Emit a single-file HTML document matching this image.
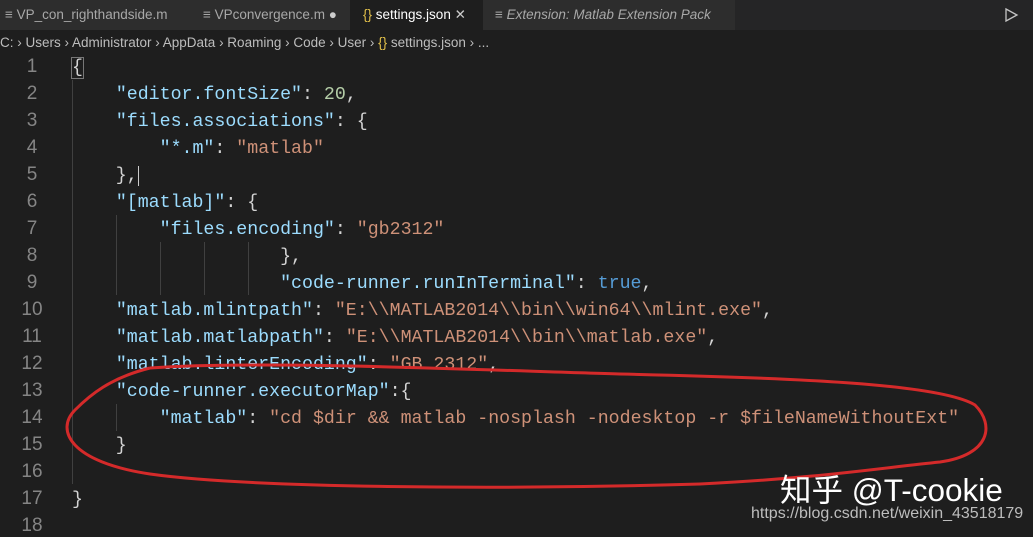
<!DOCTYPE html>
<html><head><meta charset="utf-8"><style>
html,body{margin:0;padding:0;}
body{width:1033px;height:534px;background:#1e1e1e;overflow:hidden;position:relative;font-family:"Liberation Sans","Noto Sans CJK SC",sans-serif;}
.tabs{position:absolute;left:0;top:0;width:1033px;height:30px;background:#252526;}
.tab{position:absolute;top:0;height:30px;line-height:30px;font-size:13.5px;color:#a8a8a8;background:#2d2d2d;white-space:nowrap;}
.crumb{position:absolute;top:31px;left:0;height:24px;line-height:24px;font-size:13.5px;color:#bdbdbd;white-space:nowrap;}
.ln{position:absolute;left:0;width:64px;text-align:center;font-family:"Liberation Sans",sans-serif;font-size:19px;color:#858585;}
.code{position:absolute;left:72px;font-family:"Liberation Mono",monospace;font-size:18.25px;color:#d4d4d4;white-space:pre;}
.k{color:#9cdcfe}.s{color:#ce9178}.n{color:#b5cea8}.b{color:#569cd6}
.g{position:absolute;width:1px;background:#404040;}
</style></head><body>
<div class="tabs">
 <div class="tab" style="left:0;width:185px;padding-left:5px;">≡ VP_con_righthandside.m</div>
 <div class="tab" style="left:188px;width:160px;padding-left:15px;">≡ VPconvergence.m <span style="color:#ccc">●</span></div>
 <div class="tab" style="left:350px;width:130px;padding-left:13px;background:#1e1e1e;color:#fff;"><span style="color:#e2c04a">{}</span> settings.json <span style="color:#ccc">✕</span></div>
 <div class="tab" style="left:483px;width:240px;padding-left:12px;font-style:italic;">≡ Extension: Matlab Extension Pack</div>
 <svg style="position:absolute;left:1003px;top:7px" width="16" height="16"><path d="M3 2 L14 8 L3 14 Z" fill="none" stroke="#c5c5c5" stroke-width="1.3"/></svg>
</div>
<div class="crumb">C: › Users › Administrator › AppData › Roaming › Code › User › <span style="color:#e2c04a">{}</span> settings.json › ...</div>

<div class="g" style="left:72px;top:80px;height:404px"></div>
<div class="g" style="left:116px;top:215px;height:80px"></div>
<div class="g" style="left:160px;top:242px;height:53px"></div>
<div class="g" style="left:204px;top:242px;height:53px"></div>
<div class="g" style="left:248px;top:242px;height:53px"></div>
<div class="g" style="left:116px;top:404px;height:27px"></div>

<div class="ln" style="top:56px">1</div><div class="ln" style="top:83px">2</div><div class="ln" style="top:110px">3</div><div class="ln" style="top:137px">4</div><div class="ln" style="top:164px">5</div><div class="ln" style="top:191px">6</div><div class="ln" style="top:218px">7</div><div class="ln" style="top:245px">8</div><div class="ln" style="top:272px">9</div><div class="ln" style="top:299px">10</div><div class="ln" style="top:326px">11</div><div class="ln" style="top:353px">12</div><div class="ln" style="top:380px">13</div><div class="ln" style="top:407px">14</div><div class="ln" style="top:434px">15</div><div class="ln" style="top:461px">16</div><div class="ln" style="top:488px">17</div><div class="ln" style="top:515px">18</div>

<div class="code" style="top:58px"><span style="outline:1px solid #777">{</span></div>
<div class="code" style="top:85px">    <span class="k">"editor.fontSize"</span>: <span class="n">20</span>,</div>
<div class="code" style="top:112px">    <span class="k">"files.associations"</span>: {</div>
<div class="code" style="top:139px">        <span class="k">"*.m"</span>: <span class="s">"matlab"</span></div>
<div class="code" style="top:166px">    },<span style="border-left:1px solid #ccc"> </span></div>
<div class="code" style="top:193px">    <span class="k">"[matlab]"</span>: {</div>
<div class="code" style="top:220px">        <span class="k">"files.encoding"</span>: <span class="s">"gb2312"</span></div>
<div class="code" style="top:247px">                   },</div>
<div class="code" style="top:274px">                   <span class="k">"code-runner.runInTerminal"</span>: <span class="b">true</span>,</div>
<div class="code" style="top:301px">    <span class="k">"matlab.mlintpath"</span>: <span class="s">"E:\\MATLAB2014\\bin\\win64\\mlint.exe"</span>,</div>
<div class="code" style="top:328px">    <span class="k">"matlab.matlabpath"</span>: <span class="s">"E:\\MATLAB2014\\bin\\matlab.exe"</span>,</div>
<div class="code" style="top:355px">    <span class="k">"matlab.linterEncoding"</span>: <span class="s">"GB 2312"</span>,</div>
<div class="code" style="top:382px">    <span class="k">"code-runner.executorMap"</span>:{</div>
<div class="code" style="top:409px">        <span class="k">"matlab"</span>: <span class="s">"cd $dir &amp;&amp; matlab -nosplash -nodesktop -r $fileNameWithoutExt"</span></div>
<div class="code" style="top:436px">    }</div>
<div class="code" style="top:490px">}</div>

<svg style="position:absolute;left:0;top:0" width="1033" height="534">
<path d="M150 368 C 260 360, 480 370, 620 374 C 800 378, 940 384, 975 405 C 995 425, 990 455, 940 462 C 880 468, 820 478, 700 484 C 500 490, 250 488, 150 474 C 70 462, 55 430, 75 410 C 90 395, 110 378, 150 368" fill="none" stroke="#d42a2a" stroke-width="3"/>
</svg>
<div style="position:absolute;left:780px;top:470px;font-size:31.5px;color:#fff;white-space:nowrap;line-height:40px;">知乎 @T-cookie</div>
<div style="position:absolute;left:751px;top:505px;font-size:16px;color:#bdbdbd;white-space:nowrap;">https://blog.csdn.net/weixin_43518179</div>
</body></html>
